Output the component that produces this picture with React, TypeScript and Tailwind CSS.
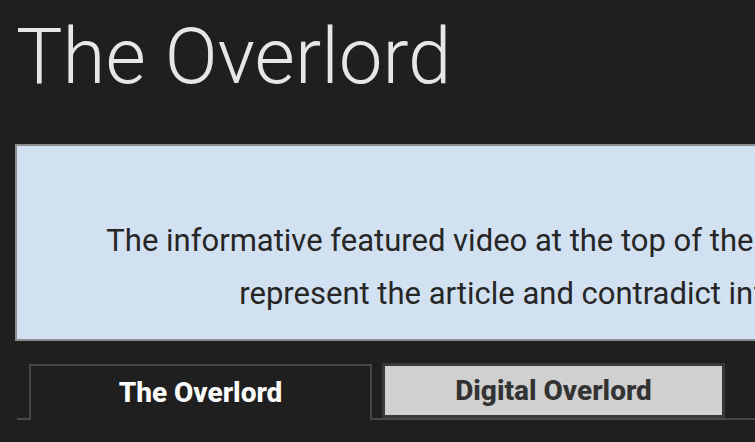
import React from "react";

export default function App() {
  return (
    <div className="w-[755px] h-[442px] overflow-hidden bg-[#1f1f1f]" style={{ fontFamily: "Roboto, 'Noto Sans', sans-serif" }}>
      <h1 className="pl-[16px] pt-[18px] text-[78px] leading-[78px] font-light text-[#e6e6e6] whitespace-nowrap">
        The Overlord
      </h1>
      <div className="ml-[15px] mt-[48px] w-[1174px] border-2 border-[#8c8c8c] bg-[#d1e1f1] pt-[68px] pb-[19px] text-center text-[31px] leading-[53px] text-[#262626] whitespace-nowrap">
        The informative featured video at the top of the page may not accurately
        <br />
        represent the article and contradict information here.
      </div>
      <div className="ml-[17px] mt-[22px] w-[1200px] flex items-end border-b-2 border-[#474747] pl-[12px]">
        <div className="w-[343px] h-[56px] -mb-[2px] border-2 border-b-0 border-[#474747] bg-[#1f1f1f] flex items-center justify-center text-[28px] font-extrabold text-white">
          The Overlord
        </div>
        <div className="ml-[10px] w-[343px] h-[55px] border-[3px] border-[#383838] bg-[#d0d0d0] flex items-center justify-center text-[28px] font-extrabold text-[#333333]">
          Digital Overlord
        </div>
      </div>
    </div>
  );
}
